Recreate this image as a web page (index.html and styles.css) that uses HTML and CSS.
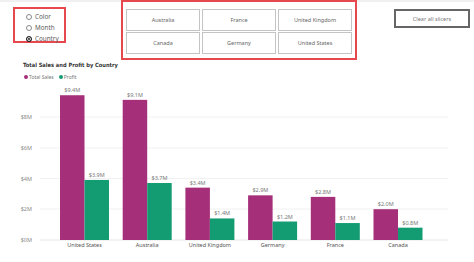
FILE: index.html
```html
<!DOCTYPE html>
<html lang="en">
<head>
    <meta charset="UTF-8">
    <meta name="viewport" content="width=device-width, initial-scale=1.0">
    <title>Sales report</title>
    <link rel="stylesheet" href="styles.css">
</head>
<body>
    <div class="topstrip"></div>
    <header class="toolbar">
        <div class="fieldpicker">
            <div class="choice"><span class="dot"></span><span class="choicetext">Color</span></div>
            <div class="choice"><span class="dot"></span><span class="choicetext">Month</span></div>
            <div class="choice checked"><span class="dot"></span><span class="choicetext">Country</span></div>
        </div>
        <div class="slicer">
            <button class="tile">Australia</button>
            <button class="tile">France</button>
            <button class="tile">United Kingdom</button>
            <button class="tile">Canada</button>
            <button class="tile">Germany</button>
            <button class="tile">United States</button>
        </div>
        <button class="clear">Clear all slicers</button>
    </header>

    <section class="chart">
        <h2 class="title">Total Sales and Profit by Country</h2>
        <div class="legend">
            <span class="key sales">Total Sales</span>
            <span class="key profit">Profit</span>
        </div>
        <svg class="plot" width="474" height="180" viewBox="0 82 474 180">
            <g class="grid">
                <line x1="40" y1="117" x2="448" y2="117"/>
                <line x1="40" y1="148" x2="448" y2="148"/>
                <line x1="40" y1="178.5" x2="448" y2="178.5"/>
                <line x1="40" y1="209" x2="448" y2="209"/>
                <line class="base" x1="40" y1="240" x2="448" y2="240"/>
            </g>
            <g class="yaxis">
                <text x="32" y="119">$8M</text>
                <text x="32" y="150">$6M</text>
                <text x="32" y="180.5">$4M</text>
                <text x="32" y="211">$2M</text>
                <text x="32" y="242">$0M</text>
            </g>
            <g id="bars"></g>
        </svg>
    </section>

    <script>
        // sales and profit per country, in $M
        const data = [
            ["United States", 9.4, 3.9],
            ["Australia", 9.1, 3.7],
            ["United Kingdom", 3.4, 1.4],
            ["Germany", 2.9, 1.2],
            ["France", 2.8, 1.1],
            ["Canada", 2.0, 0.8]
        ];
        const ns = "http://www.w3.org/2000/svg";
        const bars = document.getElementById("bars");
        const base = 240;
        const perM = 15.4;
        const barW = 24.5;

        function make(tag, attrs, text) {
            const el = document.createElementNS(ns, tag);
            for (const k in attrs) el.setAttribute(k, attrs[k]);
            if (text) el.textContent = text;
            bars.appendChild(el);
            return el;
        }

        data.forEach(function (row, i) {
            const left = 60 + i * 62.7;
            [row[1], row[2]].forEach(function (v, j) {
                const h = v * perM;
                const x = left + j * barW;
                make("rect", { x: x, y: base - h, width: barW, height: h, class: j ? "profit" : "sales" });
                make("text", { x: x + barW / 2, y: base - h - 3, class: "value" }, "$" + v.toFixed(1) + "M");
            });
            make("text", { x: left + barW, y: 247, class: "cat" }, row[0]);
        });
    </script>
</body>
</html>
```

FILE: styles.css
```css
body {
    margin: 0;
    background-color: #fff;
    font-family: "Noto Sans", "Liberation Sans", sans-serif;
    color: #555;
    width: 474px;
    height: 262px;
    overflow: hidden;
}
.topstrip {
    height: 2px;
    background-color: #f0f0f0;
}
.toolbar {
    display: flex;
    align-items: flex-start;
    height: 58px;
    margin-top: -2px;
}

/* field parameter radios */

.fieldpicker {
    box-sizing: border-box;
    width: 53px;
    height: 36px;
    margin: 7px 0 0 13px;
    padding: 3px 0 0 11px;
    border: 2px solid #e5484d;
    display: flex;
    flex-direction: column;
    gap: 2px;
}
.choice {
    display: flex;
    align-items: center;
    gap: 3px;
    height: 9px;
}
.choicetext {
    font-size: 6.3px;
    color: #5c5c5c;
}
.choice .dot {
    box-sizing: border-box;
    width: 6px;
    height: 6px;
    border: 1px solid #8a8a8a;
    border-radius: 50%;
    background-color: #fff;
}
.choice.checked .dot {
    border-color: #222;
    background-color: #222;
    box-shadow: inset 0 0 0 1px #fff;
}

/* country slicer */

.slicer {
    box-sizing: border-box;
    width: 236px;
    height: 60px;
    margin-left: 55px;
    padding: 7px 3px 4px 3px;
    border: 2px solid #e5484d;
    display: grid;
    grid-template-columns: repeat(3, 1fr);
    grid-template-rows: 22px 22px;
    gap: 1px 2px;
}
.tile {
    border: 1px solid #c4c4c4;
    background-color: #fff;
    font-family: inherit;
    font-size: 5.5px;
    color: #666;
    padding: 0;
}
.clear {
    box-sizing: border-box;
    width: 76px;
    height: 19px;
    margin: 9px 4px 0 auto;
    border: 2px solid #666;
    background-color: #fff;
    font-family: inherit;
    font-size: 5.5px;
    color: #777;
    padding: 0;
}

/* chart */

.chart {
    margin-top: 2px;
}
.title {
    margin: 0 0 0 23px;
    height: 11px;
    line-height: 11px;
    font-family: "DejaVu Sans Condensed", "DejaVu Sans", sans-serif;
    font-size: 5.7px;
    font-weight: bold;
    color: #333;
}
.legend {
    display: flex;
    gap: 5px;
    margin-left: 24px;
    height: 11px;
    align-items: center;
    font-size: 5px;
    color: #777;
}
.key {
    display: flex;
    align-items: center;
    gap: 1px;
}
.key::before {
    content: '';
    width: 4px;
    height: 4px;
    border-radius: 50%;
}
.key.sales::before {
    background-color: #a52f79;
}
.key.profit::before {
    background-color: #139c72;
}
.plot {
    display: block;
}
.grid line {
    stroke: #f1f1f1;
    stroke-width: 1;
}
.grid line.base {
    stroke: #e6e6e6;
}
.yaxis text {
    font-size: 5.5px;
    fill: #888;
    text-anchor: end;
}
rect.sales {
    fill: #a52f79;
}
rect.profit {
    fill: #139c72;
}
text.value {
    font-size: 5.5px;
    fill: #777;
    text-anchor: middle;
}
text.cat {
    font-size: 5.5px;
    fill: #555;
    text-anchor: middle;
}
```
